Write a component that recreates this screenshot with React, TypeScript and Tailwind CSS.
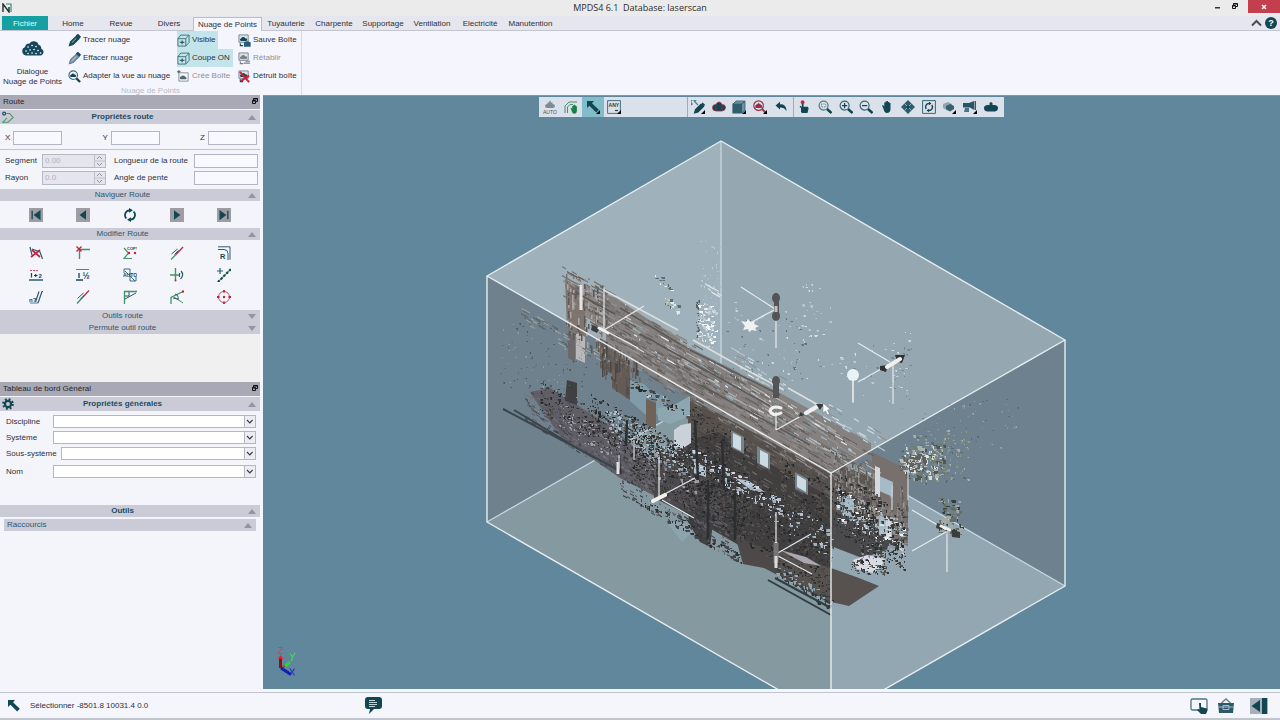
import React from "react";

const TEAL = "#134653";

/* ---------- small drawing helpers ---------- */

type DrawProps = { size?: number; className?: string; children: React.ReactNode };

function Draw({ size = 14, className = "", children }: DrawProps) {
  return (
    <svg
      width={size}
      height={size}
      viewBox="0 0 14 14"
      fill="none"
      stroke={TEAL}
      strokeWidth="1.2"
      className={"shrink-0 " + className}
      aria-hidden="true"
    >
      {children}
    </svg>
  );
}

const pencilShape = "M1.5 12.5l1.2-4L9 2.4l2.8 2.6-6.3 6.3z";
const cursorShape = "M1 1h7L6 3.2l6.8 6.6-2.6 2.7L3.4 5.8 1 8z";
const handShape = "M3.2 8L2 5.5l1-.6 1.3 1.6V2.6h1.2V1.6h1.3V1h1.2v.9h1.3v1.2h1.2v6.2c0 2-1.4 3.8-3.6 3.8-2 0-2.7-1.8-3.7-5.1z";

const IconPencil = ({ light = false }: { light?: boolean }) => (
  <Draw size={13}>
    <path d={pencilShape} fill={light ? "#7c9aac" : TEAL} stroke={light ? "#5c7e92" : TEAL} />
    <path d="M9.3 1.5l3 2.8 1-1.3-2.5-2.4z" fill={light ? "#446" : TEAL} />
    <path d="M4 9.5l5-4.8" stroke="#dce8ee" strokeWidth=".8" />
  </Draw>
);

const IconFit = () => (
  <Draw size={13}>
    <circle cx="5.6" cy="5.6" r="4.6" strokeWidth="1.2" stroke="#3a6773" />
    <path d="M9 9l4 4" strokeWidth="2.4" />
    <path d="M3 7.500a1.300 1.300 0 0 1 .4-2.500 2.200 2.200 0 0 1 4 0 1.300 1.300 0 0 1 .6 2.500z" fill={TEAL} stroke="none" />
  </Draw>
);

const IconBox = () => (
  <Draw size={13}>
    <path d="M1 5h8.500v8H1zM1 5l3-3.800h9L9.500 5M13 1.200v8L9.500 13" stroke="#3e6d79" strokeWidth="1" />
    <path d="M3 9h5M5.500 7v4" strokeWidth="1.100" />
  </Draw>
);

const IconSave = ({ kind }: { kind: "save" | "undo" | "kill" }) => {
  const c = kind === "undo" ? "#77818a" : TEAL;
  return (
    <Draw size={13}>
      <path d="M1 1h10v8H1z" fill="#dfe3e8" stroke="#687a86" strokeWidth=".9" />
      <path d="M3 7.500a1.400 1.400 0 0 1 .4-2.700 2.400 2.400 0 0 1 4.500 0A1.400 1.400 0 0 1 9 7.500z" fill={c} stroke="none" />
      <path d="M2.500 10v2.500h3" stroke={c} />
      {kind === "save" && <path d="M7 9.500h6V13H7zM7 9.500q3-2 6 0" fill="#245b80" stroke="#245b80" />}
      {kind === "undo" && <path d="M6 12h7M8 10h5" stroke={c} />}
      {kind === "kill" && <path d="M2 2l10 11M12 6l-9 6" stroke="#c92338" strokeWidth="2.200" />}
    </Draw>
  );
};

const IconCreate = () => (
  <Draw size={13}>
    <path d="M3 3h9v9H2V4" stroke="#758790" strokeWidth=".9" />
    <path d="M0 2h4M2 0v4" strokeWidth=".9" />
    <path d="M4 10a1.500 1.500 0 0 1 .5-2.900 2.500 2.500 0 0 1 4.500.4 1.300 1.300 0 0 1 .5 2.500z" fill="#55656f" stroke="none" />
  </Draw>
);

/* ---------- viewport toolbar ---------- */

const Corner = () => <path d="M14 10v4h-4z" fill="#000" stroke="none" />;

type Tool = { name: string; icon: React.ReactNode; active?: boolean };

const leftTools: Tool[] = [
  {
    name: "Route automatique",
    icon: (
      <>
        <path d="M2 6q0-2 2.500-2V2.500h1.500L7 0l1 2.500h1.500V4Q12 4 12 6T9.500 8h-5Q2 8 2 6z" fill="#7e8a94" stroke="none" />
        <text x="0" y="13.500" fontSize="5" fill="#46545c" stroke="none" fontFamily="Liberation Sans, sans-serif">AUTO</text>
      </>
    ),
  },
  {
    name: "Déplacer route",
    icon: (
      <>
        <path d="M1 13V6l4-4h8M3.500 13V7l2.500-2.500h3" stroke="#4f8c6d" strokeWidth="1" />
        <g transform="translate(5 4) scale(.75)"><path d={handShape} fill="#168142" stroke="none" /></g>
      </>
    ),
  },
  { name: "Sélectionner", active: true, icon: <><path d={cursorShape} fill={TEAL} stroke="none" /><Corner /></> },
  {
    name: "Filtre de sélection",
    icon: (
      <>
        <path d="M.600.600h12.800v12.800H.600z" stroke="#4d717c" strokeWidth="1" />
        <text x="1.600" y="7" fontSize="5" fontWeight="bold" fill={TEAL} stroke="none" fontFamily="Liberation Sans, sans-serif">ANY</text>
        <path d="M8 10.500h3" />
        <Corner />
      </>
    ),
  },
];

const midTools: Tool[] = [
  { name: "Outil tracé", icon: <><path d="M0 0h5L3.500 1.500 7 5M0 0v5l1.500-1.500" stroke="#4b7d8c" /><path d="M3.500 13l1-3.500L10 4.200l2.500 2.300L7 12z" fill={TEAL} /><path d="M11 3.200l2.500 2.400" strokeWidth="2" /><Corner /></> },
  {
    name: "Nuage",
    icon: (
      <>
        <path d="M.500 7.500Q.500 4.500 4 4.500 5 2 7 2t3 2.500q3.500 0 3.500 3T10 11H4Q.500 11 .500 7.500z" fill={TEAL} stroke="#a12d45" strokeWidth=".8" />
        <path d="M4 5v5M10 5v5" stroke="#8d3048" strokeWidth=".8" />
      </>
    ),
  },
  { name: "Boîte", icon: <><path d="M1 4h9v9H1z" fill="#315e6d" stroke="#315e6d" /><path d="M1 4l3-3h9l-3 3zM10 4l3-3v9l-3 3" fill="#6d92a2" stroke="#315e6d" strokeWidth=".8" /><Corner /></> },
  { name: "Zoom nuage", icon: <><circle cx="5.600" cy="5.600" r="4.800" stroke="#9b3149" /><path d="M9 9l4 4" strokeWidth="2.200" stroke="#8b4654" /><path d="M2.800 7.500v-2L5.600 3.500l2.900 2v2z" fill="#b3213d" stroke={TEAL} strokeWidth=".7" /><Corner /></> },
  { name: "Annuler", icon: <path d="M1.500 5.500L6 1.800v2.400c4 0 6.500 1.800 6.500 7C11 8.500 9 7.500 6 7.500v2z" fill={TEAL} stroke="none" /> },
];

const rightTools: Tool[] = [
  { name: "Pointer", icon: <><path d="M4 12V8L2.500 7l1-1.200L4.800 7V2.800h1.800v4h4q1 .4 1 1.700L10.500 13H5z" fill={TEAL} stroke="none" /><circle cx="5.600" cy="2.200" r="1.900" fill="#b92a48" stroke="none" /></> },
  { name: "Zoom fenêtre", icon: <><circle cx="5.600" cy="5.600" r="4.500" stroke="#5b7985" /><path d="M9 9l4.500 4" strokeWidth="2.400" /><path d="M3.500 4h4.300v3H3.500z" strokeWidth=".6" strokeDasharray="1 1" /></> },
  { name: "Zoom avant", icon: <><circle cx="5.600" cy="5.600" r="4.500" stroke="#3a6773" /><path d="M9 9l4.500 4" strokeWidth="2.400" /><path d="M3 5.600h5.200M5.600 3v5.200" /></> },
  { name: "Zoom arrière", icon: <><circle cx="5.600" cy="5.600" r="4.500" stroke="#3a6773" /><path d="M9 9l4.500 4" strokeWidth="2.400" /><path d="M3 5.600h5.200" /></> },
  { name: "Panoramique", icon: <path d={handShape} fill={TEAL} stroke="none" /> },
  { name: "Orienter", icon: <><path d="M7 0l7 7-7 7-7-7z" fill="#2c5d6c" stroke="none" /><path d="M3.500 3.500l7 7M10.500 3.500l-7 7" stroke="#9fb9c4" strokeWidth=".9" /><circle cx="7" cy="7" r="1.500" fill={TEAL} stroke="none" /></> },
  { name: "Rotation", icon: <><path d="M.600.600h12.800v12.800H.600z" strokeWidth="1" stroke="#3c6672" /><path d="M4.200 9A3.500 3.500 0 0 1 7.600 3.500M9.800 5A3.500 3.500 0 0 1 6.400 10.500" strokeWidth="1.400" /><path d="M7 1.800l2.500 1.700L7 5.200zM7 12.200l-2.500-1.700L7 8.800z" fill={TEAL} stroke="none" /></> },
  { name: "Rendu", icon: <><path d="M1 4l5-2 4 2v4l-4 3-5-3z" fill="#8fa5b0" stroke="none" /><path d="M4 6l4-2 4 2v3l-4 2.500L4 9z" fill="#36606e" stroke="none" /><Corner /></> },
  { name: "Caméra", icon: <><path d="M0 3h6l5-2h2v9h-2L7 7.500H0z" fill="#245566" stroke="none" /><path d="M2 8h4v4H1z" fill="#477384" stroke="none" /><path d="M11.500 1v9" stroke="#8c9ea6" /><Corner /></> },
  { name: "Cacher nuage", icon: <path d="M0 8q0-2.500 3-3h2.500V3L7 2l1.500 1v2H11q3 .5 3 3t-3 3.500H3Q0 11 0 8z" fill={TEAL} stroke="none" /> },
];

function ToolGroup({ tools, className }: { tools: Tool[]; className: string }) {
  return (
    <div className={"flex items-center " + className}>
      {tools.map((t) => (
        <button
          key={t.name}
          type="button"
          aria-label={t.name}
          className={"flex h-full flex-1 items-center justify-center " + (t.active ? "bg-[#81bccb]" : "")}
        >
          <Draw size={14}>{t.icon}</Draw>
        </button>
      ))}
    </div>
  );
}

/* ---------- point cloud scene ---------- */

const SLOPE = 0.573;

function rng(seed: number) {
  let s = seed;
  return () => {
    s = (s * 1664525 + 1013904223) % 4294967296;
    return s / 4294967296;
  };
}

type Patch = {
  x: number;
  y: number;
  w: number;
  h: number;
  n: number;
  colors: string[];
  slope?: number;
  size?: number;
  kind?: "dot" | "streak" | "post";
};

const DARK = ["#2f3133", "#3d3c3c", "#4a4a4d", "#26292b", "#57534f"];
const MID = ["#6d6865", "#85807c", "#5f5b59", "#979391", "#777370"];
const LIGHT = ["#d8dde4", "#b9c0c8", "#f1f3f6", "#a3a5ab"];
const AIR = ["#8fa7b2", "#7b95a1", "#a4b9c2"];

/* walls, roof, ground and trees */
const basePatches: Patch[] = [
  { x: 562, y: 262, w: 48, h: 34, n: 110, colors: MID, kind: "streak", size: 11 },
  { x: 590, y: 284, w: 120, h: 44, n: 260, colors: MID, kind: "streak", size: 11 },
  { x: 605, y: 322, w: 262, h: 32, n: 480, colors: MID, kind: "streak", size: 12 },
  { x: 640, y: 318, w: 232, h: 26, n: 260, colors: [...MID, "#b8b7b8"], kind: "streak", size: 16 },
  { x: 610, y: 300, w: 250, h: 34, n: 70, colors: AIR, kind: "streak", size: 9 },
  { x: 565, y: 270, w: 42, h: 65, n: 130, colors: ["#80746e", "#aaa5a2", "#5d5857"], kind: "post", size: 6 },
  { x: 600, y: 338, w: 40, h: 34, n: 90, colors: ["#5a524d", "#6e645e", "#4a4746"], kind: "post", size: 12 },
  { x: 524, y: 388, w: 130, h: 32, n: 420, colors: ["#515057", "#62606a", "#44444a", "#77727b"], size: 5, kind: "streak" },
  { x: 540, y: 378, w: 100, h: 34, n: 260, colors: DARK, size: 3 },
  { x: 590, y: 392, w: 130, h: 40, n: 650, colors: DARK, size: 3 },
  { x: 632, y: 425, w: 110, h: 52, n: 850, colors: DARK, size: 3 },
  { x: 686, y: 402, w: 60, h: 94, n: 650, colors: DARK, size: 3 },
  { x: 620, y: 450, w: 110, h: 44, n: 320, colors: ["#4d4b50", "#37383b", "#656069"], size: 4, kind: "streak" },
  { x: 730, y: 470, w: 100, h: 66, n: 700, colors: DARK, size: 3 },
  { x: 690, y: 400, w: 140, h: 46, n: 200, colors: ["#726b66", "#5b5551", "#474442"], size: 8, kind: "streak" },
  { x: 780, y: 456, w: 125, h: 44, n: 450, colors: DARK, size: 3 },
  { x: 833, y: 446, w: 74, h: 50, n: 260, colors: MID, size: 5, kind: "post" },
  { x: 836, y: 485, w: 68, h: 46, n: 240, colors: [...DARK, "#a3a6ab"], size: 3 },
];

/* foliage, stray returns and highlights in front of the walls */
const frontPatches: Patch[] = [
  { x: 628, y: 376, w: 64, h: 10, n: 50, colors: [...DARK, "#6d5c50", "#c9c6c4"], size: 4 },
  { x: 648, y: 425, w: 50, h: 22, n: 90, colors: DARK, size: 3 },
  { x: 690, y: 440, w: 145, h: 40, n: 230, colors: DARK, size: 3 },
  { x: 690, y: 446, w: 90, h: 20, n: 110, colors: ["#a4bac5", "#d2d8e2", "#a9aebc"], size: 4 },
  { x: 770, y: 490, w: 62, h: 34, n: 60, colors: ["#9ab3be", "#b7c0cc"], size: 4 },
  { x: 606, y: 405, w: 90, h: 26, n: 170, colors: ["#8aa5b1", "#9ab1bb", "#b8c1c8"], size: 3 },
  { x: 555, y: 400, w: 70, h: 26, n: 60, colors: ["#a5a2aa", "#8b95a2"], size: 3 },
  { x: 636, y: 440, w: 60, h: 26, n: 40, colors: ["#83888e", "#a09a9f", "#5a6078"], size: 4 },
  { x: 836, y: 484, w: 68, h: 34, n: 170, colors: [...LIGHT, ...AIR], size: 4 },
  { x: 836, y: 470, w: 68, h: 44, n: 160, colors: DARK, size: 4 },
  { x: 620, y: 300, w: 240, h: 40, n: 60, colors: LIGHT, kind: "streak", size: 8 },
  { x: 697, y: 298, w: 17, h: 42, n: 150, colors: ["#e6ebef", "#f4f6f8", "#c4ced5", "#9eaeb7"], size: 4 },
  { x: 696, y: 300, w: 2, h: 38, n: 30, colors: ["#5b5f62"], slope: 0, size: 2 },
  { x: 700, y: 240, w: 20, h: 70, n: 40, colors: ["#bccbd3", "#aabcc5"], slope: 0, size: 2 },
  { x: 500, y: 315, w: 85, h: 70, n: 100, colors: ["#5c6b74", "#8b9da6", "#4d565b"], slope: 0.2, size: 2 },
  { x: 905, y: 446, w: 38, h: 34, n: 150, colors: ["#d9dcd8", "#707a6d", "#4f5650", "#abb2ab"], slope: -0.1, size: 5 },
  { x: 898, y: 456, w: 28, h: 18, n: 100, colors: ["#e3e4e2", "#bcbdb9", "#5d605d"], slope: -0.2, size: 5 },
  { x: 910, y: 432, w: 58, h: 54, n: 130, colors: ["#a9b1ac", "#58666d", "#79858a", "#8f9c86"], slope: -0.1, size: 3 },
  { x: 900, y: 408, w: 120, h: 50, n: 70, colors: ["#596970", "#8196a3", "#9aa5ab"], slope: -0.1, size: 2 },
  { x: 938, y: 497, w: 22, h: 36, n: 80, colors: ["#35413d", "#686d62", "#a3aaa3"], slope: 0.1, size: 5 },
  { x: 725, y: 300, w: 80, h: 75, n: 70, colors: ["#c5d2d8", "#64757f", "#a9bac3"], slope: 0.1, size: 3 },
  { x: 730, y: 345, w: 150, h: 20, n: 60, colors: ["#d5e1e6", "#8f8f92", "#bccbd2"], kind: "streak", size: 9 },
  { x: 780, y: 320, w: 130, h: 55, n: 55, colors: ["#d5e1e6", "#758690", "#bccbd2"], slope: 0.25, size: 3 },
  { x: 800, y: 280, w: 30, h: 70, n: 22, colors: ["#ccd9df", "#b5c7cf"], slope: 0.1, size: 3 },
  { x: 890, y: 330, w: 22, h: 60, n: 28, colors: ["#ccd9df", "#758791"], slope: 0, size: 3 },
  { x: 655, y: 272, w: 16, h: 8, n: 14, colors: ["#eef2f4", "#5e6d70"], slope: 0.9, size: 4 },
  { x: 664, y: 296, w: 14, h: 8, n: 16, colors: ["#5e6d70", "#c4cba0", "#e5e8e2"], slope: 0.6, size: 4 },
  { x: 700, y: 280, w: 18, h: 6, n: 12, colors: ["#dce4e8"], kind: "streak", size: 9 },
  { x: 850, y: 560, w: 36, h: 14, n: 70, colors: ["#35383a", "#5a5551"], slope: 0, size: 3 },
  { x: 860, y: 545, w: 44, h: 16, n: 70, colors: ["#46474a", "#8f939c", "#2e3032"], slope: -0.2, size: 4 },
  { x: 772, y: 562, w: 60, h: 14, n: 100, colors: ["#2d3436", "#394245", "#8fa7b2"], size: 4 },
  { x: 640, y: 496, w: 100, h: 10, n: 80, colors: ["#2d3032", "#46474a"], size: 4 },
  { x: 520, y: 306, w: 90, h: 14, n: 50, colors: ["#5d6467", "#a1a3a4"], size: 8, kind: "streak" },
];

function buildCloud(patches: Patch[]) {
  const out: { d: string; color: string }[] = [];
  patches.forEach((p, i) => {
    const r = rng(977 * (i + 3));
    const slope = p.slope ?? SLOPE;
    const size = p.size ?? 2;
    const kind = p.kind ?? "dot";
    const byColor = p.colors.map(() => "");
    for (let k = 0; k < p.n; k++) {
      const dx = r() * p.w;
      const x = Math.round(p.x + dx);
      const y = Math.round(p.y + dx * slope + r() * p.h);
      const len = 1 + Math.floor(r() * size);
      const c = Math.floor(r() * p.colors.length);
      if (kind === "streak") byColor[c] += `M${x} ${y}l${len} ${(len * SLOPE).toFixed(1)}v1.200l${-len} ${(-len * SLOPE).toFixed(1)}z`;
      else if (kind === "post") byColor[c] += `M${x} ${y}h1.500v${len + 1}h-1.500z`;
      else byColor[c] += `M${x} ${y}h${len}v${1 + Math.floor(r() * size * 0.7)}h${-Math.max(1, len - 1)}z`;
    }
    byColor.forEach((d, c) => out.push({ d, color: p.colors[c] }));
  });
  return out;
}

const baseCloud = buildCloud(basePatches);
const frontCloud = buildCloud(frontPatches);

function Specks({ items }: { items: { d: string; color: string }[] }) {
  return (
    <g>
      {items.map((p, i) => (
        <path key={i} d={p.d} fill={p.color} />
      ))}
    </g>
  );
}

const solids: [string, string][] = [
  ["M565 279l20 11v50l-18-12z", "#80746f"],
  ["M585 291l14 8v16l8 5v9l-22-12z", "#8d8683"],
  ["M576 332l9 5v26l-9-4z", "#b9b8ba"],
  ["M568 330l7 4v28l-7-4z", "#6b6969"],
  ["M600 292l16 6 30 20 34 20v25l-76-42z", "#84807e"],
  ["M600 338l24 14v28l-24-12z", "#625c58"],
  ["M612 350l18 10v40l-18-12z", "#645b56"],
  ["M606 326l30-8 62 34 84 42 89 49v10l-40 22-130-72-95-55z", "#858180"],
  ["M530 392l20-4 60 38 46 40 20 20-6 18-50-26-60-42z", "#5f5d65"],
  ["M567 380l10 3v22l-12-4z", "#3e4042"],
  ["M646 399l10 4v26l-10-4z", "#6f6358"],
  ["M688 397l143 77v50l-143-62z", "#57514d"],
  ["M688 440l30-8 48 30 65 35v84l-30-10-11 4-60-35-60-35-20-30z", "#403e3e"],
  ["M655 450l55 26 14 50-30-8-40-20z", "#4c494c"],
  ["M690 505l24 10-4 32-10-5-12-20z", "#403f41"],
  ["M735 535l28 14 25 5 43 20v30l-40-22-27-14-21-4z", "#4c4948"],
  ["M831 473l12-7 29 12v54l-41-22z", "#5b5652"],
  ["M872 452l36 18v76l-36-14z", "#77706c"],
  ["M831 510l60 24-4 16-25 8-31-12z", "#4a494b"],
  ["M777 550l54 18 28 10 20 8-30 20-18-4-52-30z", "#57524f"],
];

const openings: [string, string][] = [
  ["M630 380l14 4 6 6 18 8-8 20-4-4v-15l-10-4v20l-16-14z", "#7f9ca8"],
  ["M658 408l14-2 18-10v20l-20 8-12-4z", "#8da7b1"],
  ["M674 430l7-5 10-2v20l-9 6-8-2z", "#cbd1d9"],
  ["M731 430l13 7v17l-13-7zM757 446l13 7v17l-13-7zM795 472l13 7v16l-13-7z", "#77838a"],
  ["M733 433l8 4v14l-8-4zM760 450l8 4v14l-8-4zM797 475l9 5v12l-9-5z", "#cbdbe3"],
  ["M694 462l12 5v10l-12-4zM735 478l14 3 16 11-14-2z", "#b4c3d0"],
  ["M844 495l10 5v18l-10-4zM877 475l16 7v15l-16-7zM879 515l13 5v19l-13-4z", "#a5bbc6"],
  ["M875 466l5 2v30l-5-3zM886 516l5 2v24l-5-2z", "#d4d9dd"],
  ["M668 524l10-2 12 2 2 8-10 10z", "#8da4ae"],
  ["M853 560l14-5 18 4-4 8-8 6-16-4z", "#d8dbe4"],
  ["M780 550l26 7 15 9-17-3z", "#aaa7b0"],
];

const gizmoLines =
  "M604 288v42M604 330l40-24M604 330l34 18M776 320v28M741 287l34 22M776 309l-26 14M776 412v18M776 430l34-19M858 343l32 19M893 365v39M890 364l-32 18M659 457v40M659 497l36-19M662 500l32 18M776 512v42M776 554l35-20M778 556l34 18M912 510l34 20M947 531v41M946 532l-34 19";

function Scene() {
  return (
    <svg
      className="absolute inset-0 h-full w-full"
      viewBox="263 96 1017 593"
      preserveAspectRatio="xMidYMid slice"
      role="img"
      aria-label="Nuage de points"
    >
      <path d="M487 276L721 141V388L487 522z" fill="#9fb1ba" />
      <path d="M721 141L1065 340V586L721 388z" fill="#95a8b1" />
      <path d="M487 276L831 473V720L487 522z" fill="#6f818c" />
      <path d="M831 473L1065 340V586L831 720z" fill="#6e818e" />
      <path d="M487 522L702 399L831 473V720z" fill="#8599a1" />
      <path d="M831 473L850 462L1065 586L831 720z" fill="#92a7b1" />
      <path d="M721 141V388L487 522M721 388L1065 586" stroke="#c5d7df" strokeWidth="1.300" fill="none" />
      {solids.map(([d, c]) => (
        <path key={d} d={d} fill={c} />
      ))}
      <Specks items={baseCloud} />
      {openings.map(([d, c]) => (
        <path key={d} d={d} fill={c} />
      ))}
      <Specks items={frontCloud} />
      <g fill="none">
        <path d="M503 409L622 472M514 410l30 18 40 24" stroke="#39454b" strokeWidth="2" />
        <path d="M768 580l63 35M775 578l56 30" stroke="#323d41" strokeWidth="2" />
        <path d="M693 340l50 28 41 22M788 388l32 18M604 290l74 40" stroke="#dfdedd" strokeWidth="1.600" />
        <path d="M690 350l90 45M620 308l60 36M575 292l40 22M640 334l130 72M700 385l110 60" stroke="#5a5859" strokeWidth="1.500" />
        <path d="M619 458l1 16M627 420l-1 26M708 480v58M735 490v50M722 440l2 50M695 420l3 60" stroke="#2c2f31" strokeWidth="2.500" />
        <path d="M618 462v12M581 285v25" stroke="#e4e5e8" strokeWidth="3" />
        <path d="M908 470v30M892 486v24M619 455v14M634 440v20" stroke="#c8cdd0" strokeWidth="1.300" />
      </g>
      <g stroke="#e7edef" strokeWidth="1.400" fill="none" strokeLinejoin="round">
        <path d="M487 276L721 141L1065 340L831 473z" />
        <path d="M487 276V522L831 720V473M1065 340V586L831 720" />
      </g>
      <path d={gizmoLines} fill="none" stroke="#e6eaec" strokeWidth="1.200" />
      <g fill="#555355">
        <ellipse cx="776" cy="298" rx="4" ry="5" />
        <path d="M774 300h5v14h-5z" />
        <ellipse cx="776" cy="316" rx="4" ry="5" />
        <ellipse cx="776" cy="381" rx="4" ry="5" />
        <path d="M773 381h6v17h-6z" />
        <path d="M895 355l10 0-3 8-5-1zM880 366l8-1-2 7-6-2z" fill="#303235" />
        <path d="M592 325l8 3-3 5-6-3zM937 523l7 2-2 5-6-2zM951 530l9 2v6l-8-1z" fill="#3c3d3d" />
      </g>
      <g stroke="#f0f1ef" strokeWidth="4" fill="none" strokeLinecap="round">
        <path d="M887 367l13-8M806 413l12-7M653 501l12-6M776 544v16" />
        <path d="M599 328l9 5M941 526l9 4" strokeWidth="3" />
        <path d="M781 408q-9-3-11 3 3 6 11 2" strokeWidth="3" />
        <path d="M853 378v24" strokeWidth="1.500" />
      </g>
      <path d="M776 306v6" stroke="#c9c3c0" strokeWidth="3" />
      <path d="M776 543v20" stroke="#777477" strokeWidth="5" />
      <path d="M776 556v12" stroke="#dbdcdd" strokeWidth="3" />
      <path d="M800 412l-1 5 6-2M816 404l8 0-4 6z" fill="#3a3a3b" />
      <circle cx="853" cy="375" r="6" fill="#e7f3f7" />
      <path d="M741 321l5 1 2-3 3 3 4-1-1 3 5 2-4 2 2 3-5-1-3 2-1-3-5 1 2-4z" fill="#eef2f3" />
      <path d="M823 403v10l2.500-2 2 4 2-1-2-4 3-.5z" fill="#fff" stroke="#6b7379" strokeWidth=".5" />
      <g fill="none" strokeWidth="1.600">
        <path d="M280.500 668v-9" stroke="#8d1010" strokeWidth="3" />
        <path d="M278 659h5l-2.500-4z" fill="#e02020" stroke="none" />
        <path d="M278 647.500h4.500l-4.500 6h4.500" stroke="#d5404c" strokeWidth="1" />
        <path d="M282 668l6-5" stroke="#934a30" strokeWidth="2" />
        <path d="M285 666l5-4" stroke="#2fd04a" strokeWidth="3" />
        <path d="M290 653.500l2.500 3.500 2.500-4M292.500 657l-1 4" stroke="#44d95b" strokeWidth="1.200" />
        <path d="M281 668l10 6.500" stroke="#151cb0" strokeWidth="3" />
        <path d="M290 668.500l4.500 7M294.500 668.500l-4.500 7" stroke="#2a31d0" strokeWidth="1.100" />
      </g>
    </svg>
  );
}

/* ---------- side panels ---------- */

const Restore = () => (
  <svg width="6" height="6" viewBox="0 0 6 6" fill="none" stroke="#111" strokeWidth="1" aria-hidden="true">
    <path d="M1.500 2V.500h4v3H4M.500 2.500h3v3h-3z" />
    <path d="M1.500 1h4M.500 3h3" />
  </svg>
);

function DockTitle({ children }: { children: string }) {
  return (
    <div className="flex h-[14px] items-center justify-between bg-[#a9a9b5] pr-[2px] pl-[3px] text-[#26262c]">
      <h2>{children}</h2>
      <button type="button" aria-label={"Détacher " + children} className="mb-[2px]">
        <Restore />
      </button>
    </div>
  );
}

type SectionProps = { title: string; open?: boolean; strong?: boolean; icon?: React.ReactNode; className?: string };

function SectionBar({ title, open = true, strong = false, icon, className = "h-[12px]" }: SectionProps) {
  return (
    <button
      type="button"
      aria-expanded={open}
      className={"grid w-full grid-cols-[16px_1fr_16px] items-center bg-[#cbcbd8] text-[#2c5668] " + className}
    >
      <span className="flex pl-[2px]">{icon}</span>
      <span className={"pr-[15px] " + (strong ? "font-bold text-[#1c4c5e]" : "")}>{title}</span>
      <svg width="8" height="5" viewBox="0 0 8 5" className="ml-1" aria-hidden="true">
        <path d={open ? "M0 5h8L4 0z" : "M0 0h8L4 5z"} fill="#9494a0" />
      </svg>
    </button>
  );
}

function Coord({ label }: { label: string }) {
  return (
    <label className="flex items-center gap-[3px]">
      {label}
      <input className="h-[14px] w-[49px] border border-[#b4b4c2] bg-[#f8f8ff]" />
    </label>
  );
}

function Spin({ id, value }: { id: string; value: string }) {
  return (
    <div className="flex h-[14px] w-16 border border-[#b8b8c5] bg-[#e5e5ee]">
      <input id={id} disabled value={value} className="min-w-0 flex-1 pl-[2px] text-[#b1b1bd]" />
      <svg width="11" height="12" viewBox="0 0 11 12" fill="none" stroke="#8f8f9b" aria-hidden="true">
        <path d="M.500 0v12M1 6h10" stroke="#c0c0cb" />
        <path d="M3 4l2.500-2.500L8 4M3 8l2.500 2.500L8 8" />
      </svg>
    </div>
  );
}

const navIcons: { name: string; icon: React.ReactNode }[] = [
  { name: "Premier", icon: <path d="M2.500 2v10M11.500 2.500L5.500 7l6 4.500z" fill={TEAL} strokeWidth="1.500" /> },
  { name: "Précédent", icon: <path d="M10.500 1.500L3 7l7.500 5.500z" fill={TEAL} stroke="none" /> },
  { name: "Actualiser", icon: <><path d="M3.400 10.500A4.800 4.800 0 0 1 6.500 2.300M10.600 3.500A4.800 4.800 0 0 1 7.500 11.700" strokeWidth="1.700" /><path d="M6 0l4 2.300-4 2.500zM8 14l-4-2.300 4-2.500z" fill={TEAL} stroke="none" /></> },
  { name: "Suivant", icon: <path d="M3.500 1.500L11 7l-7.500 5.500z" fill={TEAL} stroke="none" /> },
  { name: "Dernier", icon: <path d="M11.500 2v10M2.500 2.500l6 4.500-6 4.500z" fill={TEAL} strokeWidth="1.500" /> },
];

const G = "#3f9460";
const R = "#c5203a";
const S = "#2e5a70";
const glyph = { stroke: "none", fill: TEAL, fontWeight: "bold", fontFamily: "Liberation Sans, sans-serif" } as const;

const editIcons: { name: string; icon: React.ReactNode }[] = [
  { name: "Supprimer route", icon: <><path d="M1 1l2 8M3 3l8 3 2.500 7" stroke={S} /><path d="M3 4l8 7M11 4l-9 7" stroke={R} strokeWidth="1.700" /></> },
  { name: "Supprimer point", icon: <><path d="M3.500 13V3.500H14" stroke={G} strokeWidth="1.400" /><path d="M.500.500l5 5M5.500.500l-5 5" stroke={R} strokeWidth="1.300" /></> },
  { name: "Copier", icon: <><path d="M1 2l4.500 5L1 12.500h8" stroke={G} /><text x="4" y="4" fontSize="4" {...glyph}>COPY</text><circle cx="6" cy="7" r="1.200" fill={R} stroke="none" /><circle cx="12" cy="7" r="1.200" fill={R} stroke="none" /></> },
  { name: "Parallèle", icon: <><path d="M1 13.500l5-5" stroke={G} strokeWidth="1.300" /><path d="M6 8.500l7-7.500" stroke={R} /><path d="M1.500 8l6-5M4.500 8.500l4-4" stroke={S} strokeWidth="1" /></> },
  { name: "Rayon", icon: <><path d="M1 .800h12v13M1 3.500h6q4 0 4 4V14" stroke={S} strokeWidth="1" /><text x="3" y="13" fontSize="7.500" {...glyph}>R</text></> },
  { name: "Diviser par deux", icon: <><path d="M1 2.500h8" stroke={R} strokeDasharray="2 1" strokeWidth=".8" /><path d="M0 12h14" stroke={S} strokeWidth="1.500" /><path d="M2.500 5v4.500M5 7.500h3.500M6.700 6v3" /><text x="9.500" y="10" fontSize="6" {...glyph}>2</text></> },
  { name: "Milieu", icon: <><path d="M0 1.500h13" stroke={R} strokeWidth=".8" /><path d="M0 12h7M3 5v5" strokeWidth="1.300" /><text x="6.500" y="11" fontSize="8.500" {...glyph}>½</text></> },
  { name: "Mode automatique", icon: <><path d="M1 1h6v12h6V9M2 3l10 10M1 1v4" stroke={S} strokeWidth=".9" /><text x="0" y="9" fontSize="5" {...glyph}>AUTO</text></> },
  { name: "Tourner", icon: <><path d="M5.500 0v12M0 7h9" stroke={G} strokeWidth="1.400" /><circle cx="5.500" cy="12.500" r="1" fill={R} stroke="none" /><path d="M9.500 5v4M11 3q3.500 4-.5 8" stroke={S} /></> },
  { name: "Ajouter point", icon: <><path d="M1 14L14 1" stroke={G} /><path d="M0 3h6M3 0v6" stroke={S} /><path d="M1 14L14 1" strokeWidth="2.200" strokeDasharray="2 2" /></> },
  { name: "Pente", icon: <><path d="M6.500 12L10 1.500M9 13L13 1.500h1" stroke={S} /><path d="M1 13h8" stroke={S} strokeWidth=".8" /><text x="0" y="11.500" fontSize="6" {...glyph}>n?</text></> },
  { name: "Aligner", icon: <><path d="M1 13.500l6-6.500" stroke={G} strokeWidth="1.400" /><path d="M7 7l6-6.500" stroke={R} /><path d="M1.500 8.500l6-5.500M4.500 9l4-4" stroke={S} strokeWidth="1" /></> },
  { name: "Angle", icon: <><path d="M1.500 14V1.500H14" stroke={G} strokeWidth="1.300" /><path d="M2 9L13 3" stroke={S} strokeWidth="1" /><path d="M6 2v4H2" strokeWidth=".9" /></> },
  { name: "Angle libre", icon: <><path d="M1 14V7.500L13 1.500" stroke={G} strokeWidth="1.300" /><path d="M4 7l9 6" stroke={G} strokeWidth="1" /><path d="M5 4q4 1 3 6M3 8l5 1" stroke={S} strokeWidth="1" /><circle cx="13" cy="1.500" r="1.200" fill={R} stroke="none" /></> },
  { name: "Centre", icon: <><circle cx="7" cy="7" r="5.500" stroke="#b9576c" strokeWidth="1" /><path d="M7 0v2.500M7 11.500V14M0 7h2.500M11.500 7H14" stroke={R} strokeWidth="1.800" /><circle cx="7" cy="7" r="1.200" fill={R} stroke="none" /></> },
];

function Combo({ id, label, options, className = "" }: { id: string; label: string; options: string[]; className?: string }) {
  return (
    <div className={"flex items-center gap-1 " + className}>
      <label htmlFor={id} className="min-w-[43px] whitespace-nowrap">
        {label}
      </label>
      <div className="relative flex h-[13px] flex-1 border border-[#b5b5c4] bg-white">
        <select id={id} className="w-full appearance-none bg-transparent text-[8px]" defaultValue="">
          {options.map((o) => (
            <option key={o} value={o}>{o}</option>
          ))}
        </select>
        <svg width="11" height="11" viewBox="0 0 11 11" fill="none" className="pointer-events-none absolute top-0 right-0 bg-[#ececf3]" aria-hidden="true">
          <path d="M.500 0v11" stroke="#b5b5c4" />
          <path d="M3 4l2.800 2.800L8.600 4" stroke="#3c3c44" strokeWidth="1.200" />
        </svg>
      </div>
    </div>
  );
}

function SidePanels() {
  return (
    <aside className="flex w-[263px] shrink-0 flex-col border-r-3 border-[#f4f5fd] bg-[#f4f5fb]">
      <section className="flex flex-col">
        <DockTitle>Route</DockTitle>
        <SectionBar
          title="Propriétés route"
          strong
          className="mt-px h-[14px]"
          icon={
            <Draw size={12}>
              <path d="M5 3h4l4 4.500-6 5.500H1l5-5" stroke="#4e9568" />
              <circle cx="2.500" cy="3" r="1.700" stroke="#2d516c" strokeWidth="1.500" />
            </Draw>
          }
        />
        <div className="flex justify-between border-b border-[#c3c3cd] pt-[7px] pr-[3px] pb-1 pl-[5px]">
          <Coord label="X" />
          <Coord label="Y" />
          <Coord label="Z" />
        </div>
        <div className="grid grid-cols-[37px_72px_80px_1fr] items-center gap-y-[3px] pt-1 pr-[2px] pb-1 pl-[5px]">
          <label htmlFor="segment">Segment</label>
          <Spin id="segment" value="0.00" />
          <label htmlFor="longueur">Longueur de la route</label>
          <input id="longueur" className="h-[14px] w-full min-w-0 border border-[#b4b4c2] bg-[#f8f8ff]" />
          <label htmlFor="rayon">Rayon</label>
          <Spin id="rayon" value="0.0" />
          <label htmlFor="angle">Angle de pente</label>
          <input id="angle" className="h-[14px] w-full min-w-0 border border-[#b4b4c2] bg-[#f8f8ff]" />
        </div>
        <SectionBar title="Naviguer Route" />
        <div className="grid h-[27px] grid-cols-5 place-items-center px-[13px]">
          {navIcons.map((n) => (
            <button
              key={n.name}
              type="button"
              aria-label={n.name}
              className={"flex h-[14px] w-[14px] items-center justify-center " + (n.name === "Actualiser" ? "" : "bg-[#9d9da3]")}
            >
              <Draw size={n.name === "Actualiser" ? 14 : 12}>{n.icon}</Draw>
            </button>
          ))}
        </div>
        <SectionBar title="Modifier Route" />
        <div className="grid grid-cols-5 place-items-center gap-y-2 px-[13px] py-[6px]">
          {editIcons.map((n) => (
            <button key={n.name} type="button" aria-label={n.name}>
              <Draw size={14}>{n.icon}</Draw>
            </button>
          ))}
        </div>
        <SectionBar title="Outils route" open={false} />
        <SectionBar title="Permute outil route" open={false} />
        <div className="h-[48px] bg-[#f0f0f1]" />
      </section>
      <section className="flex flex-col">
        <DockTitle>Tableau de bord Général</DockTitle>
        <SectionBar
          title="Propriétés générales"
          strong
          className="mt-px h-[14px]"
          icon={
            <Draw size={12}>
              <circle cx="7" cy="7" r="3.600" strokeWidth="2.600" />
              <circle cx="7" cy="7" r="5.700" strokeWidth="2.200" strokeDasharray="2.240 2.240" />
            </Draw>
          }
        />
        <div className="flex flex-col gap-[3px] pt-1 pr-1 pl-[6px]">
          <Combo id="discipline" label="Discipline" options={[""]} />
          <Combo id="systeme" label="Système" options={[""]} />
          <Combo id="sous-systeme" label="Sous-système" options={[""]} />
          <Combo id="nom" label="Nom" options={[""]} className="mt-[2px]" />
        </div>
        <SectionBar title="Outils" strong className="mt-[27px] h-[12px]" />
        <button type="button" className="mx-1 mt-[2px] flex h-[12px] items-center justify-between bg-[#cbcbd8] pr-1 pl-[3px] text-[#2c5668]">
          Raccourcis
          <svg width="8" height="5" viewBox="0 0 8 5" aria-hidden="true">
            <path d="M0 5h8L4 0z" fill="#9494a0" />
          </svg>
        </button>
      </section>
    </aside>
  );
}

/* ---------- window frame ---------- */

const tabs = [
  { name: "Home", cls: "w-[48px]" },
  { name: "Revue", cls: "w-[48px]" },
  { name: "Divers", cls: "w-[48px]" },
  { name: "Nuage de Points", cls: "w-[69px]" },
  { name: "Tuyauterie", cls: "w-[48px]" },
  { name: "Charpente", cls: "w-[48px]" },
  { name: "Supportage", cls: "w-[50px]" },
  { name: "Ventilation", cls: "w-[48px]" },
  { name: "Electricité", cls: "w-[48px]" },
  { name: "Manutention", cls: "w-[53px]" },
];

type RibbonItem = { name: string; icon: React.ReactNode; on?: boolean; off?: boolean };

const ribbon: { cls: string; items: RibbonItem[] }[] = [
  {
    cls: "w-[107px]",
    items: [
      { name: "Tracer nuage", icon: <IconPencil /> },
      { name: "Effacer nuage", icon: <IconPencil light /> },
      { name: "Adapter la vue au nuage", icon: <IconFit /> },
    ],
  },
  {
    cls: "w-[59px]",
    items: [
      { name: "Visible", icon: <IconBox />, on: true },
      { name: "Coupe ON", icon: <IconBox />, on: true },
      { name: "Crée Boîte", icon: <IconCreate />, off: true },
    ],
  },
  {
    cls: "w-[62px]",
    items: [
      { name: "Sauve Boîte", icon: <IconSave kind="save" /> },
      { name: "Rétablir", icon: <IconSave kind="undo" />, off: true },
      { name: "Détruit boîte", icon: <IconSave kind="kill" /> },
    ],
  },
];

function Header() {
  return (
    <header>
      <div className="grid h-4 grid-cols-[1fr_auto_1fr] items-center bg-[#ebebeb]">
        <svg width="10" height="10" viewBox="0 0 10 10" className="ml-[2px]" fill="none" aria-hidden="true">
          <path d="M1 9V1l6 8V4" stroke="#222b2d" strokeWidth="1.400" />
          <path d="M4 1h5v8" stroke="#2c9174" strokeWidth="1.200" />
        </svg>
        <h1 className="font-['Open_Sans',sans-serif] text-[9px] leading-4 whitespace-pre text-[#2b2b2b]">MPDS4 6.1  Database: laserscan</h1>
        <div className="flex h-full items-start justify-end">
          <button type="button" aria-label="Réduire" className="flex h-3 w-4 items-center justify-center">
            <svg width="6" height="6" aria-hidden="true"><path d="M0 4h5v1.500H0z" fill="#333" /></svg>
          </button>
          <button type="button" aria-label="Restaurer" className="flex h-3 w-[18px] items-center justify-center">
            <Restore />
          </button>
          <button type="button" aria-label="Fermer" className="ml-1 flex h-[13px] w-[32px] items-center justify-center bg-[#c33f4d]">
            <svg width="6" height="6" viewBox="0 0 6 6" aria-hidden="true"><path d="M1 1l4 4M5 1L1 5" stroke="#fff" strokeWidth="1.400" /></svg>
          </button>
        </div>
      </div>
      <nav className="flex h-[15px] items-end border-b border-[#c3c4cf] bg-[#e5e6ee] pl-[2px]">
        <button type="button" className="mr-[1px] h-[14px] w-[46px] bg-[#16a0a2] pt-px text-[#e7f7f7]">Fichier</button>
        {tabs.map((t) => (
          <button
            key={t.name}
            type="button"
            className={
              "flex h-[14px] items-center justify-center pt-px whitespace-nowrap " +
              t.cls +
              (t.name === "Nuage de Points" ? " -mb-px border border-b-0 border-[#bdbdc8] bg-[#f5f6fd]" : "")
            }
          >
            {t.name}
          </button>
        ))}
        <button type="button" aria-label="Replier le ruban" className="ml-auto pb-[3px]">
          <svg width="11" height="8" viewBox="0 0 11 8" fill="none" aria-hidden="true"><path d="M1 6.500L5.500 2 10 6.500" stroke="#4c4c55" strokeWidth="2" /></svg>
        </button>
        <button type="button" aria-label="Aide" className="mr-[3px] ml-[3px] flex h-3 w-3 items-center justify-center self-center rounded-full bg-[#134653] text-[9px] font-bold text-white">
          ?
        </button>
      </nav>
      <div className="flex h-[64px] bg-[#f5f6fd]">
        <div className="relative flex border-r border-[#d9dae3] pr-px">
          <button type="button" className="flex w-[65px] flex-col items-center pt-[10px] leading-[10px]">
            <svg width="24" height="15" viewBox="0 0 24 15" aria-hidden="true">
              <path d="M5 14.500a4.500 4.500 0 0 1-1-8.600A4.500 4.500 0 0 1 8.500 2.500a5 5 0 0 1 9 1.200 4 4 0 0 1 2.800 4A3.600 3.600 0 0 1 20 14.500z" fill="#15485a" />
              <path d="M7 6h.1M11 4.500h.1M15 5.500h.1M5 10h.1M9 9h.1M13 8.500h.1M17 9.500h.1M7 12.500h.1M11 12h.1M15 12.500h.1M19.500 12h.1" stroke="#fff" strokeWidth="1.600" strokeLinecap="round" />
            </svg>
            <span className="mt-[11px] whitespace-nowrap">Dialogue</span>
            <span className="whitespace-nowrap">Nuage de Points</span>
          </button>
          <div className="flex gap-[2px] pl-[3px]">
            {ribbon.map((col) => (
              <div key={col.items[0].name} className={"flex flex-col items-start " + col.cls}>
                {col.items.map((b) => (
                  <button
                    key={b.name}
                    type="button"
                    className={
                      "flex h-[18px] items-center gap-[2px] whitespace-nowrap " +
                      (b.on ? "bg-[#c3e4ea] pr-[3px] " : "pr-px ") +
                      (b.off ? "text-[#8d8f98]" : "")
                    }
                  >
                    {b.icon}
                    {b.name}
                  </button>
                ))}
              </div>
            ))}
          </div>
          <div className="absolute inset-x-0 bottom-0 text-center leading-[9px] text-[#b9bac5]">Nuage de Points</div>
        </div>
      </div>
    </header>
  );
}

function StatusBar() {
  return (
    <footer className="mt-[3px] grid h-[28px] grid-cols-[364px_1fr_auto] items-center border-t border-b-2 border-[#bfc4cd] bg-[#f5f6fc]">
      <div className="flex items-center gap-[9px] pl-[7px]">
        <Draw size={14}><path d={cursorShape} fill={TEAL} stroke="none" /></Draw>
        <output>Sélectionner -8501.8 10031.4 0.0</output>
      </div>
      <button type="button" aria-label="Messages" className="justify-self-start">
        <svg width="19" height="17" viewBox="0 0 19 17" aria-hidden="true">
          <path d="M4 0h11q3 0 3 3v6q0 3-3 3h-5l-5 5 1-5H4q-3 0-3-3V3q0-3 3-3z" fill={TEAL} />
          <path d="M5 3.500h6M5 5.500h8M5 7.500h8M5 9.500h6" stroke="#c4d3da" strokeWidth="1" />
        </svg>
      </button>
      <div className="flex items-center gap-[7px] pr-3">
        <button type="button" aria-label="Mode tactile">
          <svg width="20" height="18" viewBox="0 0 20 18" fill="none" aria-hidden="true">
            <rect x="1" y="2" width="16" height="11" rx="1.500" stroke="#4c7582" strokeWidth="1.300" />
            <path d="M9 6h2v4l6 1.500q1 .5.500 2L16 17h-5l-4-4 1-1 1.500 1z" fill={TEAL} />
          </svg>
        </button>
        <button type="button" aria-label="Boîte à outils">
          <svg width="18" height="18" viewBox="0 0 18 18" fill="none" aria-hidden="true">
            <path d="M4.500 6l4.500-4 4.500 4" stroke="#68818b" strokeWidth="1.500" />
            <path d="M1 6h16l-1 10H2z" fill="#2c5867" />
            <path d="M1 10h16M6 8.500h6v4H6z" stroke="#a9bbc2" />
          </svg>
        </button>
        <button type="button" aria-label="Masquer le panneau" className="ml-2">
          <svg width="18" height="16" viewBox="0 0 18 16" aria-hidden="true">
            <rect width="18" height="16" fill="#a9afb6" />
            <path d="M10 2v12L1.500 8z" fill={TEAL} />
            <path d="M12 0h5v16h-5z" fill={TEAL} />
          </svg>
        </button>
      </div>
    </footer>
  );
}

export default function App() {
  return (
    <div className="flex min-h-screen flex-col bg-[#f4f5fd] font-['Liberation_Sans',Arial,sans-serif] text-[8px] leading-[12px] text-[#303038]">
      <Header />
      <div className="flex flex-1">
        <SidePanels />
        <main className="relative flex flex-1 items-start justify-center overflow-hidden border-t border-[#8794a1] bg-[#60879c] pt-px">
          <Scene />
          <div role="toolbar" aria-label="Vue" className="relative flex h-5 bg-[#dae1eb]">
            <ToolGroup tools={leftTools} className="mr-[62px] w-[86px]" />
            <ToolGroup tools={midTools} className="w-[106px] border-l border-[#a2abb5] pr-[2px]" />
            <ToolGroup tools={rightTools} className="w-[211px] border-l border-[#a2abb5] pr-[3px]" />
          </div>
        </main>
      </div>
      <StatusBar />
    </div>
  );
}
